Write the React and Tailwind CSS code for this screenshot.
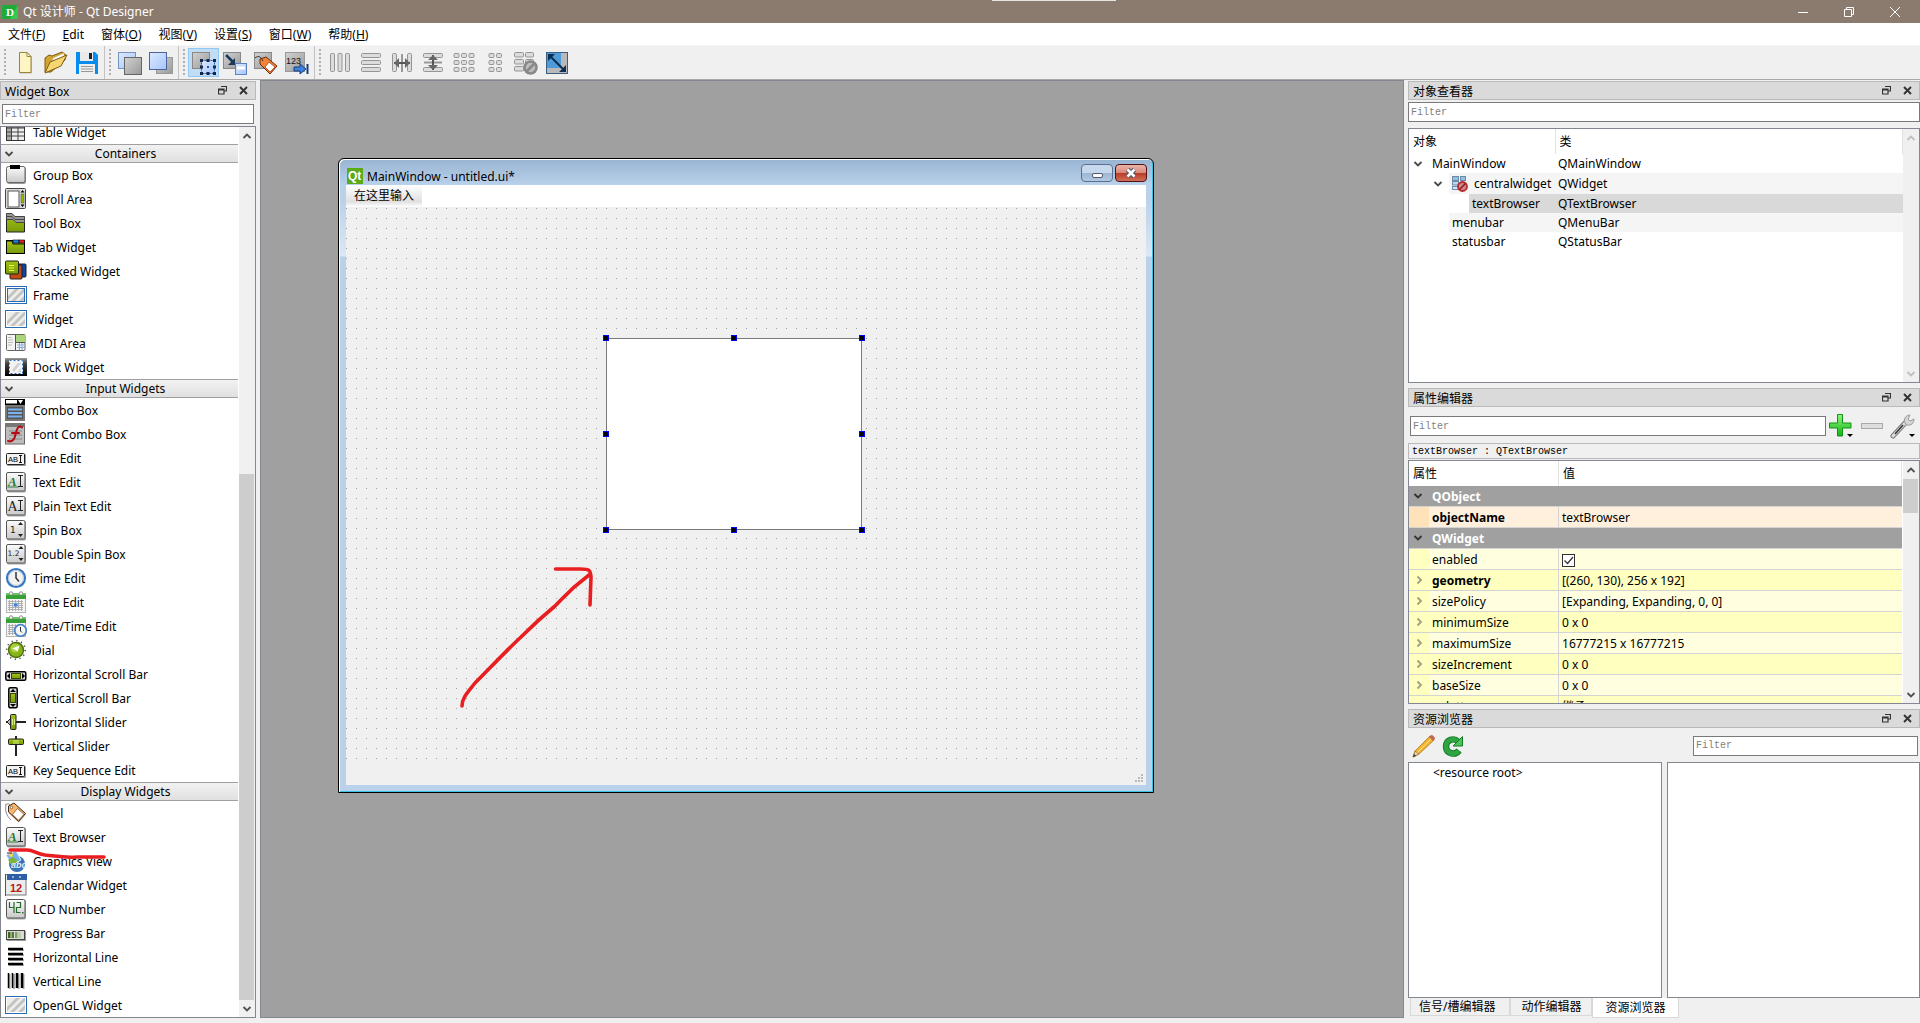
import React from "react";

const outline = { stroke: "#222", strokeWidth: 1 };

function Svg({ children, size = 22, className = "" }) {
  return (
    <svg viewBox={`0 0 ${size} ${size}`} width={size} height={size} className={`shrink-0 ${className}`} aria-hidden="true">
      {children}
    </svg>
  );
}

function Chevron({ dir = "down", color = "#4a4a4a" }) {
  const d = { down: "M1.5 3 5 6.5 8.5 3", up: "M1.5 7 5 3.5 8.5 7", right: "M3.5 1.5 7 5 3.5 8.5" }[dir];
  return (
    <Svg size={10}>
      <path d={d} fill="none" stroke={color} strokeWidth="1.8" />
    </Svg>
  );
}

function Hatch({ inner }) {
  return (
    <Svg>
      <rect x="0.5" y="2.5" width="21" height="17" fill="#fff" stroke="#2a6cb8" />
      <rect x="2" y="4" width="18" height="14" fill="#ededeb" />
      <path d="M2 13 11 4h4L2 17zM5 18 19 4h1v3L9 18zM13 18l7-7v4l-3 3z" fill="#c2c2c0" />
      {inner && <rect x="2.5" y="4.5" width="17" height="13" fill="none" stroke="#2a6cb8" />}
    </Svg>
  );
}

function Plate({ children }) {
  return (
    <Svg>
      <rect x="2" y="2" width="19" height="19.5" rx="1.5" fill="#aaa" />
      <rect x="1.5" y="1.5" width="18.5" height="18.5" rx="1.5" fill="url(#silver)" stroke="#555" />
      {children}
    </Svg>
  );
}

function AbiIcon() {
  return (
    <Svg>
      <rect x="2" y="7" width="19" height="12" rx="1" fill="#999" />
      <rect x="1.5" y="6.5" width="18" height="11" rx="1" fill="#f2f2f2" stroke="#222" />
      <text x="3" y="15" fontSize="7.500" fontFamily="Liberation Sans" fill="#000">AB</text>
      <path d="M14 8.500h3M14 15.500h3M15.500 8.500v7" stroke="#000" fill="none" strokeWidth=".9" />
    </Svg>
  );
}

function CalendarBase() {
  return (
    <g>
      <rect x="1.5" y="4.5" width="19" height="17" fill="#f5f5f5" stroke="#b5b5b5" />
      <rect x="1" y="2" width="20" height="6" fill="#36a137" />
      <rect x="1" y="2" width="20" height="2" fill="#6cc665" />
      <circle cx="6" cy="2.5" r="1.8" fill="#eee" stroke="#777" strokeWidth=".7" />
      <circle cx="16" cy="2.5" r="1.8" fill="#eee" stroke="#777" strokeWidth=".7" />
      <path d="M3 10.5h15M3 12.5h15M3 14.5h15M3 16.5h15M3 18.5h15M4.500 9v11M7.500 9v11M10.500 9v11M13.500 9v11M16.500 9v11" stroke="#aaa" strokeWidth=".9" />
    </g>
  );
}

const TagShape = () => (
  <g>
    <path d="M4 5 9 1.500l12 11-7 8L4 11z" fill="#555" opacity=".4" />
    <path d="M3.500 4 9 1l11.500 10.500-7 8L3.500 10z" fill="#f9b46c" stroke="#442a12" />
    <path d="m12.500 6.500 6.500 5.800-5.500 6-6-6z" fill="#fff" stroke="#7a431a" strokeWidth=".7" />
    <circle cx="6.5" cy="5.5" r="1.2" fill="#fff" stroke="#333" strokeWidth=".6" />
    <path d="M0 3c3-2 5-1 6 1M1 3c-1 6 0 10 5 15" fill="none" stroke="#888" />
  </g>
);

const icons = {
  table: (
    <Svg>
      <rect x="1.5" y="2.5" width="18" height="17" fill="#eee" stroke="#333" />
      <rect x="2" y="3" width="17" height="4" fill="#888" />
      <rect x="2" y="7" width="4" height="12" fill="#aaa" />
      <path d="M2 7h17M2 11h17M2 15h17M6.500 3v16M13 3v16" stroke="#444" />
    </Svg>
  ),
  group: (
    <Svg>
      <rect x="2" y="3" width="19" height="17" rx="2" fill="#999" />
      <rect x="1.5" y="2.5" width="18.5" height="16" rx="2" fill="url(#silver)" stroke="#666" />
      <rect x="5" y="1" width="10" height="4" fill="#000" />
    </Svg>
  ),
  scroll: (
    <Svg>
      <rect x=".5" y=".5" width="20" height="20" rx="1" fill="#ddd" stroke="#444" />
      <rect x="3" y="3" width="11" height="16" fill="#fff" stroke="#555" />
      <rect x="16" y="6" width="3" height="9" fill="#8fbe00" stroke="#444" strokeWidth=".5" />
      <path d="m15.500 4.500 2-2.500 2 2.500zM15.500 16.500l2 2.500 2-2.500z" />
    </Svg>
  ),
  toolbox: (
    <Svg>
      <path d="M1.500 2v18h18V7H12L8 3z" fill="url(#olive)" {...outline} />
      <path d="M1.500 1.500H7l3 3h9.500v6H11l-3-3H1.500z" fill="#999" stroke="#444" />
      <path d="M2 4.500h5l3 3h9" fill="none" stroke="#444" />
    </Svg>
  ),
  tab: (
    <Svg>
      <rect x="1.5" y="4.5" width="18" height="13" fill="url(#olive)" stroke="#000" />
      <rect x="8" y="4" width="6" height="3" fill="#1788e8" stroke="#000" strokeWidth=".6" />
      <rect x="14" y="4" width="5.5" height="3" fill="#e62020" stroke="#000" strokeWidth=".6" />
      <path d="M2 5h5l1 3h11" fill="none" stroke="#111" />
    </Svg>
  ),
  stacked: (
    <Svg>
      <rect x="9" y="4" width="12" height="13" rx="1" fill="#0f45a8" {...outline} />
      <rect x="5" y="5" width="12" height="14" rx="1" fill="#c24b12" {...outline} />
      <rect x=".5" y="1" width="13" height="13" rx="1" fill="url(#olive)" {...outline} />
      <path d="M4 5.500h5M4 8h5M4 10.500h5" stroke="#e9ff40" />
    </Svg>
  ),
  frame: <Hatch inner />,
  hatch: <Hatch />,
  mdi: (
    <Svg>
      <rect x="1.5" y="2.5" width="18.5" height="16" rx="1" fill="#f4f4f4" stroke="#666" />
      <rect x="11" y="3" width="9" height="7" fill="#a9d67c" />
      <path d="M10.500 3v15M11 10.500h9" stroke="#555" />
      <path d="M3 5.500h4M3 8h5M3 10.500h5M3 13h4" stroke="#bbb" />
      <path d="M12 13h7M12 15.500h7M14.500 11v7M17 11v7" stroke="#84aede" />
    </Svg>
  ),
  dock: (
    <Svg>
      <rect y="2" width="22" height="18" fill="url(#dark)" />
      <rect x="4.5" y="4.5" width="13" height="13" fill="#f2f2f2" stroke="#fff" />
      <rect x="4.5" y="4.5" width="13" height="13" fill="none" stroke="#2d6fc4" strokeDasharray="2 2" />
      <path d="m7 14 6-7h3l-7 9zM13 16l3-4v4z" fill="#d0d0d0" />
    </Svg>
  ),
  combo: (
    <Svg>
      <rect width="20" height="22" fill="#777" />
      <rect width="20" height="6" fill="#000" />
      <rect x="1" y="1" width="11" height="3.5" fill="#fff" />
      <path d="M13 1h5l-2.500 4z" fill="#fff" />
      <rect x="2" y="8" width="16" height="12" fill="#555" />
      <path d="M3 10.500h14M3 14h14M3 17.500h14" stroke="#7db0ee" strokeWidth="2" />
    </Svg>
  ),
  font: (
    <Svg>
      <rect x=".5" y=".5" width="19" height="20.5" fill="#bdbdbd" stroke="#666" />
      <rect width="20" height="4" fill="#777" />
      <path d="M4 8h13M4 12h13M4 16h13" stroke="#a2a2a2" strokeWidth="2" />
      <path d="M17 4.500c-3-3-5 1-6 5s-2 10.500-8 8.500M7 10h7" fill="none" stroke="#b50d12" strokeWidth="2" strokeLinecap="round" />
    </Svg>
  ),
  abi: <AbiIcon />,
  textedit: (
    <Plate>
      <text x="3" y="14.5" fontSize="13" fontStyle="italic" fontFamily="Liberation Serif" fontWeight="bold" fill="#287a32">A</text>
      <path d="M2.500 16h11" stroke="#287a32" />
      <path d="M13 4.500h5M13 15.500h5M15.500 4.500v11" stroke="#222" fill="none" />
    </Plate>
  ),
  plain: (
    <Plate>
      <text x="2.5" y="15.5" fontSize="14" fontFamily="Liberation Serif" fill="#222">A</text>
      <path d="M13 5.500h5M13 15.500h5M15.500 5.500v10" stroke="#222" fill="none" />
    </Plate>
  ),
  spin: (
    <Plate>
      <text x="5" y="14" fontSize="9" fontFamily="DejaVu Sans" fill="#222">1</text>
      <path d="m13 6 2.500-3L18 6zM13 15l2.500 3 2.500-3z" fill="#222" />
    </Plate>
  ),
  dspin: (
    <Plate>
      <text x="2.5" y="13" fontSize="7.5" fontFamily="DejaVu Sans" fill="#222">1.2</text>
      <path d="m13.500 6 2.500-3 2.500 3zM13.500 15l2.500 3 2.500-3z" fill="#222" />
    </Plate>
  ),
  time: (
    <Svg>
      <circle cx="11" cy="11" r="9" fill="#f3f3f1" stroke="#3976c2" strokeWidth="2.2" />
      <circle cx="11" cy="11" r="7.5" fill="none" stroke="#b6cbe4" />
      <path d="M11 5v6l3 3.500" fill="none" stroke="#333" strokeWidth="1.5" />
    </Svg>
  ),
  date: (
    <Svg>
      <CalendarBase />
      <rect x="9" y="12.5" width="3.5" height="3" fill="#3584e4" />
    </Svg>
  ),
  datetime: (
    <Svg>
      <CalendarBase />
      <circle cx="15.5" cy="15.5" r="5.8" fill="#f5f5f5" stroke="#4a84c8" strokeWidth="1.8" />
      <path d="M15.500 12v4l1.500 1.500" fill="none" stroke="#333" />
    </Svg>
  ),
  dial: (
    <Svg>
      <circle cx="11" cy="11" r="9.3" fill="none" stroke="#4c4c3a" strokeWidth="1.6" strokeDasharray="1.2 3.67" />
      <circle cx="11" cy="11" r="7.5" fill="#86b31a" stroke="#4d6b0b" strokeWidth="1.4" />
      <circle cx="10" cy="9" r="4.5" fill="#b9dc4c" opacity=".7" />
      <path d="m14.500 6.500-2 6-2-1.500-3.500-1.500z" fill="#fff" />
    </Svg>
  ),
  hscroll: (
    <Svg>
      <rect x=".8" y="8.8" width="20" height="8.4" rx="1.5" fill="#d8d8d8" stroke="#000" strokeWidth="1.5" />
      <rect x="6.5" y="10.5" width="9" height="5" fill="url(#olive)" stroke="#384a00" />
      <path d="m5 10-3 3 3 3zM17 10l3 3-3 3z" />
    </Svg>
  ),
  vscroll: (
    <Svg>
      <rect x="3.8" y=".8" width="8.4" height="20" rx="1.5" fill="#d8d8d8" stroke="#000" strokeWidth="1.5" />
      <rect x="5.5" y="6.5" width="5" height="9" fill="url(#olive)" stroke="#384a00" />
      <path d="m5 5 3-3 3 3zM5 17l3 3 3-3z" />
    </Svg>
  ),
  hslider: (
    <Svg>
      <path d="M1 11h20" stroke="#222" strokeWidth="2" />
      <path d="m5 8-3 3 3 3" fill="#bbb" stroke="#222" />
      <rect x="5.5" y="3.5" width="5.5" height="15" rx="1" fill="url(#olive)" {...outline} />
      <path d="M7.500 8v6M9.500 8v6" stroke="#e9ffa0" strokeWidth=".8" />
    </Svg>
  ),
  vslider: (
    <Svg>
      <path d="M11 1v20" stroke="#222" strokeWidth="2" />
      <rect x="3.5" y="4" width="15" height="5.5" rx="1" fill="url(#olive)" {...outline} />
      <path d="M8 6h6M8 8h6" stroke="#e9ffa0" strokeWidth=".8" />
    </Svg>
  ),
  label: <Svg><TagShape /></Svg>,
  graphics: (
    <Svg>
      <circle cx="12" cy="14" r="8" fill="#3a72b4" />
      <path d="m1 5 10-4 5 9-9 5z" fill="#72b3ec" stroke="#e8eef5" />
      <path d="m3 10 5-3 5 4-6 4z" fill="#7fb239" />
      <circle cx="6" cy="5" r="2" fill="#ffd53d" />
      <path d="M2 3h5" stroke="#222" />
      <text x="6" y="18" fontSize="9" fontWeight="bold" fontStyle="italic" fontFamily="Liberation Sans" fill="#dceaf7">abc</text>
    </Svg>
  ),
  calendar: (
    <Svg>
      <rect x=".5" y=".5" width="20.5" height="20.5" fill="#ececec" stroke="#777" />
      <path d="M.5 0v22" stroke="#555" />
      <rect x="2" width="20" height="6" fill="#2d5fa6" />
      <path d="M7 3h2M14 3h2" stroke="#fff" />
      <text x="5" y="18" fontSize="11" fontWeight="bold" fontFamily="Liberation Sans" fill="#b5191e">12</text>
    </Svg>
  ),
  lcd: (
    <Plate>
      <path d="M4.500 4v5.500h4.500M9 4v11M11.500 4.500h4v5h-4v5h4" fill="none" stroke="#246a28" strokeWidth="1.2" />
      <rect x="17" y="14" width="1.5" height="1.5" fill="#246a28" />
    </Plate>
  ),
  progress: (
    <Svg>
      <rect x="2" y="9" width="19" height="10" fill="#999" />
      <rect x="1.5" y="8.5" width="18" height="9" fill="#d9ddd2" stroke="#444" />
      <rect x="3" y="10" width="2.5" height="6" fill="#41661e" />
      <rect x="6.5" y="10" width="2.5" height="6" fill="#55793a" />
      <rect x="10" y="10" width="2.5" height="6" fill="#82a06c" />
      <rect x="13.5" y="10" width="2" height="6" fill="#b4c4a6" />
    </Svg>
  ),
  hline: (
    <Svg>
      <path d="M4 4h15M4 9h15M4 14h15M4 19h15" stroke="#aaa" strokeWidth="2" />
      <path d="M3 3h15M3 8h15M3 13h15M3 18h15" stroke="#000" strokeWidth="2.4" />
    </Svg>
  ),
  vline: (
    <Svg>
      <path d="M4.500 4v15M9 4v15M13.500 4v15M18.500 4v15" stroke="#aaa" strokeWidth="2" />
      <path d="M3.500 3v15M7.500 3v15" stroke="#000" strokeWidth="1.5" />
      <path d="M12 3v15M17 3v15" stroke="#000" strokeWidth="2.5" />
    </Svg>
  ),
};

const groups = [
  { title: null, items: [["Table Widget", "table"]] },
  {
    title: "Containers",
    items: [
      ["Group Box", "group"], ["Scroll Area", "scroll"], ["Tool Box", "toolbox"], ["Tab Widget", "tab"],
      ["Stacked Widget", "stacked"], ["Frame", "frame"], ["Widget", "hatch"], ["MDI Area", "mdi"], ["Dock Widget", "dock"],
    ],
  },
  {
    title: "Input Widgets",
    items: [
      ["Combo Box", "combo"], ["Font Combo Box", "font"], ["Line Edit", "abi"], ["Text Edit", "textedit"],
      ["Plain Text Edit", "plain"], ["Spin Box", "spin"], ["Double Spin Box", "dspin"], ["Time Edit", "time"],
      ["Date Edit", "date"], ["Date/Time Edit", "datetime"], ["Dial", "dial"], ["Horizontal Scroll Bar", "hscroll"],
      ["Vertical Scroll Bar", "vscroll"], ["Horizontal Slider", "hslider"], ["Vertical Slider", "vslider"],
      ["Key Sequence Edit", "abi"],
    ],
  },
  {
    title: "Display Widgets",
    items: [
      ["Label", "label"], ["Text Browser", "textedit"], ["Graphics View", "graphics"], ["Calendar Widget", "calendar"],
      ["LCD Number", "lcd"], ["Progress Bar", "progress"], ["Horizontal Line", "hline"], ["Vertical Line", "vline"],
      ["OpenGL Widget", "hatch"],
    ],
  },
];

function Gradients() {
  return (
    <svg width="0" height="0" className="absolute" aria-hidden="true">
      <defs>
        <linearGradient id="silver" x1="0" y1="0" x2="0" y2="1">
          <stop offset="0" stopColor="#fbfbfb" /><stop offset="1" stopColor="#c9c9c9" />
        </linearGradient>
        <linearGradient id="olive" x1="0" y1="0" x2="0" y2="1">
          <stop offset="0" stopColor="#a3c614" /><stop offset="1" stopColor="#78990a" />
        </linearGradient>
        <linearGradient id="dark" x1="0" y1="0" x2="0" y2="1">
          <stop offset="0" stopColor="#999" /><stop offset=".3" stopColor="#444" /><stop offset="1" stopColor="#000" />
        </linearGradient>
        <linearGradient id="sheet" x1="0" y1="0" x2="1" y2="1">
          <stop offset="0" stopColor="#dde9ff" /><stop offset="1" stopColor="#a5c6fb" />
        </linearGradient>
        <linearGradient id="steel" x1="0" y1="0" x2="1" y2="1">
          <stop offset="0" stopColor="#d2d2d2" /><stop offset="1" stopColor="#999" />
        </linearGradient>
        <linearGradient id="leaf" x1="0" y1="0" x2="0" y2="1">
          <stop offset="0" stopColor="#8df57d" /><stop offset="1" stopColor="#12b512" />
        </linearGradient>
      </defs>
    </svg>
  );
}

const bar = { fill: "#dcdcdc", stroke: "#949494" };

const toolGroups = [
  [
    ["新建", <Svg size={24}><path d="M7 2.500h8l4 4v16H7z" fill="#888" opacity=".5" /><path d="M6.500 1.500H14l4 4v16H6.500z" fill="#fdf6c4" stroke="#9a8638" /><path d="M14 1.500v4h4z" fill="#fff" stroke="#9a8638" /></Svg>],
    ["打开", <Svg size={24}><path d="M1 21V7l4-3 3 1 10-4 4 3-1 5-14 12z" fill="#d4a432" stroke="#7e5c10" /><path d="m6 18 3-11 11-5v6z" fill="#fff" stroke="#bba766" strokeWidth=".6" /><path d="M1 22 6 11l17-7-6 11z" fill="#f5d671" stroke="#7e5c10" /></Svg>],
    ["保存", <Svg size={24}><path d="M1 1h19l3 3v19H1z" fill="#078df0" /><path d="M5 1h13v9H5z" fill="#e9e9e9" /><path d="M14 2h3v6h-3z" fill="#222" /><path d="M4 13h16v10H4z" fill="#eee" /><path d="M6 15.500h12M6 18h12M6 20.500h12" stroke="#999" /></Svg>],
  ],
  [
    ["置后", <Svg size={24}><rect x=".5" y="1.5" width="17" height="16" fill="url(#sheet)" stroke="#7794c0" /><rect x="6.5" y="6.5" width="17" height="17" fill="url(#steel)" stroke="#666" /></Svg>],
    ["置前", <Svg size={24}><rect x="7.5" y="6.5" width="16" height="16" fill="url(#steel)" stroke="#999" /><rect x=".5" y="1.5" width="17" height="17" fill="url(#sheet)" stroke="#4b659a" /></Svg>],
  ],
  [
    ["编辑窗口部件", <Svg size={24}><rect x=".5" y="1.5" width="17" height="16" fill="url(#steel)" stroke="#888" /><rect x="9.5" y="9.5" width="13" height="13" fill="url(#sheet)" stroke="#2552a3" strokeDasharray="2 1" /><path d="M8 8h3v3H8zM14.500 8h3v3h-3zM21 8h3v3h-3zM8 14.500h3v3H8zM21 14.500h3v3h-3zM8 21h3v3H8zM14.500 21h3v3h-3zM21 21h3v3h-3z" fill="#13274d" /><path d="M15 15h2v2h-2z" fill="#2552a3" /></Svg>],
    ["编辑信号/槽", <Svg size={24}><rect x=".5" y="1.5" width="17" height="16" fill="url(#steel)" stroke="#888" /><path d="m3 4 8 8" stroke="#1d3a5c" strokeWidth="2.5" /><path d="M12 7v7H5z" fill="#1d3a5c" /><rect x="12.5" y="12.5" width="11" height="11" fill="url(#sheet)" stroke="#5d83c4" /><path d="M14 17h8" stroke="#fff" strokeWidth="3" /></Svg>],
    ["编辑伙伴", <Svg size={24}><rect x=".5" y="1.5" width="17" height="16" fill="url(#steel)" stroke="#888" /><path d="m6 8 6-2 11 9-7 8L6 13z" fill="#ef8437" stroke="#6d2b0d" /><path d="m15 11 6 5-5 5-5-5z" fill="#fff" stroke="#c3521b" /><path d="M1 7c4-3 6-1 8 3" stroke="#333" fill="none" /></Svg>],
    ["编辑 Tab 顺序", <Svg size={24}><rect x=".5" y="1.5" width="19" height="19" fill="url(#steel)" stroke="#999" /><text x="1" y="13" fontSize="9" fontFamily="Liberation Sans" fill="#111">123</text><path d="M9 16h6v-3l6 5-6 5v-3H9z" fill="#3d83dc" stroke="#163f80" /><path d="M22.500 13v10" stroke="#163f80" strokeWidth="2" /></Svg>],
  ],
  [
    ["水平布局", <Svg size={24}><rect x="2.5" y="2.5" width="4" height="18" rx="1" {...bar} /><rect x="10" y="2.5" width="4" height="18" rx="1" {...bar} /><rect x="17.5" y="2.5" width="4" height="18" rx="1" {...bar} /></Svg>],
    ["垂直布局", <Svg size={24}><rect x="2.5" y="2.5" width="19" height="4" rx="1" {...bar} /><rect x="2.5" y="9.5" width="19" height="4" rx="1" {...bar} /><rect x="2.5" y="16.5" width="19" height="4" rx="1" {...bar} /></Svg>],
    ["使用分裂器水平布局", <Svg size={24}><rect x="2.5" y="2.5" width="4" height="18" rx="1" {...bar} /><rect x="17.5" y="2.5" width="4" height="18" rx="1" {...bar} /><path d="M12 3v18" stroke="#999" strokeWidth="2" /><path d="M4 12h16" stroke="#555" strokeWidth="2" /><path d="m9 7-5 5 5 5zM15 7l5 5-5 5z" fill="#666" /></Svg>],
    ["使用分裂器垂直布局", <Svg size={24}><rect x="2.5" y="2.5" width="19" height="4" rx="1" {...bar} /><rect x="2.5" y="16.5" width="19" height="4" rx="1" {...bar} /><path d="M3 11.500h18" stroke="#999" strokeWidth="2" /><path d="M12 4v15" stroke="#555" strokeWidth="2" /><path d="m7 9 5-5 5 5zM7 14l5 5 5-5z" fill="#666" /></Svg>],
    ["栅格布局", <Svg size={24}>{[2, 9.5, 17].map((x) => [2.5, 9.5, 16.5].map((y) => <rect key={`${x}-${y}`} x={x} y={y} width="5" height="4" rx="1" {...bar} />))}</Svg>],
    ["在窗体布局中布局", <Svg size={24}>{[6, 13.5].map((x) => [2.5, 9.5, 16.5].map((y) => <rect key={`${x}-${y}`} x={x} y={y} width="5" height="4" rx="1" {...bar} />))}</Svg>],
    ["打破布局", <Svg size={24}><rect x=".5" y="1.5" width="9" height="4.5" rx="1" {...bar} /><rect x="11.5" y="1.5" width="8" height="4.5" rx="1" {...bar} /><rect x=".5" y="8.5" width="9" height="4.5" rx="1" {...bar} /><rect x="11.5" y="8.5" width="8" height="4.5" rx="1" {...bar} /><rect x=".5" y="15.5" width="9" height="4.5" rx="1" {...bar} /><circle cx="16.5" cy="16.5" r="6" fill="#bbb" stroke="#888" strokeWidth="2.5" /><path d="m12.500 20.500 8-8" stroke="#888" strokeWidth="2.5" /></Svg>],
    ["调整大小", <Svg size={24}><rect x="1.5" y="1.5" width="21" height="21" fill="#b9b9b9" stroke="#3a5f86" /><rect x="2" y="2" width="14" height="15" fill="#4d9bd8" /><path d="m5 5 14 14" stroke="#0d2f4f" strokeWidth="2" /><path d="M3 3h7l-7 7zM21 21v-7l-7 7z" fill="#0d2f4f" /></Svg>],
  ],
];

const menus = [["文件", "F"], ["", "E", "dit"], ["窗体", "O"], ["视图", "V"], ["设置", "S"], ["窗口", "W"], ["帮助", "H"]];

function FilterInput({ label, className = "" }) {
  return (
    <input
      type="text"
      aria-label={label}
      placeholder="Filter"
      className={`h-5 min-w-0 rounded-none border border-[#7a7a7a] bg-white px-0.5 font-['Liberation_Mono',monospace] text-[10px] outline-none placeholder:text-[#808080] ${className}`}
    />
  );
}

function DockTitle({ children }) {
  return (
    <header className="flex h-[19px] shrink-0 items-center border border-[#b9b9b9] bg-[#dadada] pl-1 pr-[7px]">
      <h2 className="flex-1 pt-0.5 leading-4">{children}</h2>
      <button type="button" aria-label="浮动" className="mr-3">
        <Svg size={9}><path d="M3 .5h5.500v4.500H6M.5 3H6v5H.5zM.5 4H6" fill="none" stroke="#333" strokeWidth="1.2" /></Svg>
      </button>
      <button type="button" aria-label="关闭">
        <Svg size={9}><path d="m1 1 7 7M8 1 1 8" stroke="#333" strokeWidth="1.9" /></Svg>
      </button>
    </header>
  );
}

function ScrollBar({ before, thumb, after, disabled }) {
  const color = disabled ? "#bfbfbf" : "#505050";
  return (
    <div className="flex w-4 shrink-0 flex-col bg-[#f0f0f0]" aria-hidden="true">
      <div className="flex h-[18px] items-center pl-[3px]"><Chevron dir="up" color={color} /></div>
      <div className={before} />
      {thumb && <div className={`w-[15px] bg-[#cdcdcd] ${thumb}`} />}
      <div className={after} />
      <div className="flex h-[17px] items-center pl-[3px]"><Chevron color={color} /></div>
    </div>
  );
}

function WidgetBox() {
  return (
    <aside className="relative mr-1 flex w-64 shrink-0 flex-col pb-[5px] pt-px">
      <DockTitle>Widget Box</DockTitle>
      <FilterInput label="过滤窗口部件" className="mx-0.5 mb-0.5 mt-1 shrink-0" />
      <div className="flex min-h-0 flex-1 border border-[#828790] bg-white">
        <div className="flex min-w-0 flex-1 flex-col justify-end overflow-hidden pr-px">
          {groups.map((g) => (
            <section key={g.title ?? "views"} className="shrink-0">
              {g.title && (
                <h3 className="flex h-[19px] items-center border-y border-[#a0a0a0] bg-linear-to-b from-[#f2f2f2] to-[#e0e0e0] pl-[3px] pr-px">
                  <Chevron />
                  <span className="flex-1 text-center leading-4">{g.title}</span>
                </h3>
              )}
              <ul>
                {g.items.map(([name, icon]) => (
                  <li key={name} className="flex h-6 items-center gap-1.5 pl-1">
                    {icons[icon]}
                    <span className="pt-0.5">{name}</span>
                  </li>
                ))}
              </ul>
            </section>
          ))}
        </div>
        <ScrollBar before="grow-[329]" thumb="grow-[525]" after="grow-0" />
      </div>
      <svg viewBox="0 0 110 20" width="110" height="20" className="absolute bottom-[159px] left-0" aria-hidden="true">
        <path d="M10 6h17c7 0 9 4 18 5 12 1 17 3 32 2h27" fill="none" stroke="#e81e20" strokeWidth="3.5" strokeLinecap="round" />
      </svg>
    </aside>
  );
}

function Handle({ className }) {
  return <span className={`absolute size-1.5 border border-[#0000ff] bg-black ${className}`} />;
}

function FormWindow() {
  return (
    <div className="absolute left-[77px] top-[77px] flex h-[635px] w-[816px] flex-col rounded-t-md border border-black bg-[linear-gradient(#98b4d2,#b9d1ea_26px,#b9d1ea_40px,#dbe8f6_97px,#b9d1ea_98px)] px-[7px] pb-[7px] shadow-[inset_1px_1px_0_#fff,inset_-1px_-1px_0_#39c5e3]">
      <header className="flex h-[26px] shrink-0 items-center">
        <Svg size={16} className="ml-px mt-2">
          <rect width="16" height="16" fill="#5caa15" />
          <text x="1" y="12" fontSize="12" fontWeight="bold" fontFamily="Liberation Sans Narrow, Liberation Sans" fill="#fff">Qt</text>
        </Svg>
        <h2 className="ml-1 mt-2.5 flex-1 leading-4">MainWindow - untitled.ui*</h2>
        <div className="-mr-px mt-0.5 flex gap-0.5">
          <button type="button" aria-label="最小化" className="flex h-[18px] w-8 items-center justify-center rounded-sm border border-[#5b7090] bg-[linear-gradient(#c7d8ec,#c7d8ec_50%,#9cb4d0_50%,#b3c9e2)]">
            <span className="mt-1 h-[5px] w-[11px] rounded-xs border border-[#53596b] bg-white" />
          </button>
          <button type="button" aria-label="关闭窗体" className="flex h-[18px] w-8 items-center justify-center rounded-sm border border-[#521117] bg-[linear-gradient(#eab5a9,#d9897b_48%,#b83a26_50%,#cf7158)]">
            <Svg size={12}>
              <path d="m2.500 2.500 7 7M9.500 2.500l-7 7" stroke="#535566" strokeWidth="4.6" />
              <path d="m2.500 2.500 7 7M9.500 2.500l-7 7" stroke="#fff" strokeWidth="2.6" />
            </Svg>
          </button>
        </div>
      </header>
      <div className="flex min-h-0 flex-1 flex-col bg-[#f0f0f0]">
        <div className="mb-px flex h-[22px] shrink-0 bg-white">
          <button type="button" className="bg-[linear-gradient(#fff,#e0e0e0_75%,#fff)] px-2 leading-[22px]">在这里输入</button>
        </div>
        <div className="relative flex-1 bg-[conic-gradient(at_1px_1px,transparent_75%,#a0a0a0_0)] bg-[length:10px_10px]">
          <div className="absolute left-[260px] top-[130px] h-48 w-64 border border-[#7a7a7a] bg-white" />
          <div className="absolute left-[257px] top-[127px] h-[198px] w-[262px]">
            <Handle className="left-0 top-0" />
            <Handle className="left-32 top-0" />
            <Handle className="right-0 top-0" />
            <Handle className="left-0 top-24" />
            <Handle className="right-0 top-24" />
            <Handle className="bottom-0 left-0" />
            <Handle className="bottom-0 left-32" />
            <Handle className="bottom-0 right-0" />
          </div>
          <svg viewBox="0 0 140 150" width="140" height="150" className="absolute left-[110px] top-[355px]" aria-hidden="true">
            <path d="M6 143c0-8 5-13 13-23C33 106 52 86 65 74c10-10 17-17 34-31 9-9 14-16 34-31M99.500 6h25c9 0 10 1 10.500 8l-1 28" fill="none" stroke="#e81e20" strokeWidth="3.6" strokeLinecap="round" strokeLinejoin="round" />
          </svg>
        </div>
        <div className="flex h-[22px] shrink-0 items-end justify-end p-0.5">
          <Svg size={10}><path d="M7 1h2v2H7zM4 4h2v2H4zM7 4h2v2H7zM1 7h2v2H1zM4 7h2v2H4zM7 7h2v2H7z" fill="#b9b9b9" /></Svg>
        </div>
      </div>
    </div>
  );
}

const objects = [
  { name: "MainWindow", cls: "QMainWindow", pad: "ml-1", open: true, h: "h-[19px]", bg: "" },
  { name: "centralwidget", cls: "QWidget", pad: "ml-6", open: true, icon: true, h: "h-[21px]", bg: "bg-[#f5f5f5]" },
  { name: "textBrowser", cls: "QTextBrowser", pad: "ml-[60px]", h: "h-[19px]", bg: "bg-[#d9d9d9]" },
  { name: "menubar", cls: "QMenuBar", pad: "ml-10", h: "h-[19px]", bg: "bg-[#f5f5f5]" },
  { name: "statusbar", cls: "QStatusBar", pad: "ml-10", h: "h-[19px]", bg: "" },
];

function ObjectInspector() {
  return (
    <section className="flex min-h-0 flex-[302] flex-col">
      <DockTitle>对象查看器</DockTitle>
      <FilterInput label="过滤对象" className="mb-1.5 mt-0.5 shrink-0" />
      <div className="flex min-h-0 flex-1 border border-[#828790] bg-white">
        <div className="min-w-0 flex-1 overflow-hidden">
          <table className="w-full table-fixed border-collapse">
            <colgroup><col className="w-[146px]" /><col /></colgroup>
            <thead>
              <tr className="h-[25px] text-left">
                <th className="border-r border-[#e2e2e2] p-0 pl-1 font-normal">对象</th>
                <th className="border-r border-[#e2e2e2] p-0 pl-1 font-normal">类</th>
              </tr>
            </thead>
            <tbody>
              {objects.map((o) => (
                <tr key={o.name} className={o.h}>
                  <td className="p-0">
                    <div className={`flex items-center ${o.h} ${o.pad}`}>
                      {o.open && <span className="mr-1.5 shrink-0"><Chevron /></span>}
                      <div className={`flex h-full flex-1 items-center gap-1.5 whitespace-nowrap pl-[3px] ${o.bg}`}>
                        {o.icon && (
                          <Svg size={16}>
                            <rect x=".5" y=".5" width="6" height="4" fill="#8fc0e8" stroke="#6d8ba8" />
                            <rect x="8.5" y=".5" width="5" height="4" fill="#8fc0e8" stroke="#6d8ba8" />
                            <rect x=".5" y="5.5" width="6" height="3.5" fill="#b9d6ef" stroke="#6d8ba8" />
                            <rect x=".5" y="10.5" width="6" height="3" fill="#d5e6f5" stroke="#6d8ba8" />
                            <circle cx="10.5" cy="10.5" r="4.5" fill="#c98a8a" stroke="#b72a2f" strokeWidth="1.8" />
                            <path d="m7.500 13.500 6-6" stroke="#8d1d22" strokeWidth="1.6" />
                          </Svg>
                        )}
                        {o.name}
                      </div>
                    </div>
                  </td>
                  <td className={`p-0 pl-[3px] ${o.bg}`}>{o.cls}</td>
                </tr>
              ))}
            </tbody>
          </table>
        </div>
        <ScrollBar before="grow" after="grow-0" disabled />
      </div>
    </section>
  );
}

const light = "bg-[#ffffdf]";
const deep = "bg-[#ffffbf]";
const properties = [
  { group: "QObject" },
  { name: "objectName", value: "textBrowser", bold: true, bg: "bg-[#fff0de]", side: "bg-[#ffe1ba]" },
  { group: "QWidget" },
  { name: "enabled", check: true, bg: light, side: deep },
  { name: "geometry", value: "[(260, 130), 256 x 192]", bold: true, bg: deep, side: deep, more: true },
  { name: "sizePolicy", value: "[Expanding, Expanding, 0, 0]", bg: light, side: deep, more: true },
  { name: "minimumSize", value: "0 x 0", bg: deep, side: deep, more: true },
  { name: "maximumSize", value: "16777215 x 16777215", bg: light, side: deep, more: true },
  { name: "sizeIncrement", value: "0 x 0", bg: deep, side: deep, more: true },
  { name: "baseSize", value: "0 x 0", bg: light, side: deep, more: true },
  { name: "palette", value: "继承", bg: deep, side: deep },
];

function PropertyEditor() {
  return (
    <section className="flex min-h-0 flex-[316] flex-col">
      <DockTitle>属性编辑器</DockTitle>
      <div className="flex h-9 shrink-0 items-center pl-0.5 pt-0.5">
        <FilterInput label="过滤属性" className="flex-1" />
        <button type="button" aria-label="添加动态属性" className="ml-0.5">
          <Svg size={26}>
            <path d="M9.500 1.500h5v8.500h8.500v5h-8.500v8h-5v-8H1.500v-5h8z" fill="url(#leaf)" stroke="#159016" />
            <path d="M19 21h6l-3 3z" />
          </Svg>
        </button>
        <button type="button" aria-label="删除动态属性" className="ml-1.5">
          <Svg size={24}><rect x="1.5" y="9.5" width="21" height="5" fill="#ddd" stroke="#aaa" /></Svg>
        </button>
        <button type="button" aria-label="配置属性编辑器" className="ml-1.5 mr-1">
          <Svg size={26}>
            <path d="m3 23 13-14" stroke="#777" strokeWidth="5" strokeLinecap="round" />
            <path d="m3 23 13-14" stroke="#ddd" strokeWidth="3" strokeLinecap="round" />
            <path d="m5 21 8-9" stroke="#333" strokeWidth="1.5" />
            <path d="M15 10c-2-4 1-8 5-8l-2 4 2 2 4-2c0 4-3 7-7 6z" fill="#d5d5d5" stroke="#999" />
            <path d="M19 21h6l-3 3z" />
          </Svg>
        </button>
      </div>
      <p className="mb-px h-4 shrink-0 border border-[#b9b9b9] pl-[3px] font-['Liberation_Mono',monospace] text-[10px] leading-4">textBrowser : QTextBrowser</p>
      <div className="flex min-h-0 flex-1 border border-[#828790] bg-white">
        <div className="min-w-0 flex-1 overflow-hidden pr-px">
          <table className="w-full table-fixed border-separate border-spacing-0">
            <colgroup><col className="w-5" /><col className="w-[130px]" /><col /></colgroup>
            <thead>
              <tr className="h-[25px] text-left">
                <th colSpan={2} className="border-r border-[#e2e2e2] p-0 pl-1 font-normal">属性</th>
                <th className="border-r border-[#e2e2e2] p-0 pl-1 font-normal">值</th>
              </tr>
            </thead>
            <tbody>
              {properties.map((p) =>
                p.group ? (
                  <tr key={p.group} className="h-[21px] bg-[#a0a0a0] font-bold text-white">
                    <td className="border-b border-[#d4d4d4] p-0 pl-1"><Chevron color="#333" /></td>
                    <td colSpan={2} className="border-b border-[#d4d4d4] p-0 pl-[3px] pt-0.5 leading-[18px]">{p.group}</td>
                  </tr>
                ) : (
                  <tr key={p.name} className={`h-[21px] ${p.bg}`}>
                    <td className={`border-b border-[#d4d4d4] p-0 pl-[5px] ${p.side}`}>{p.more && <Chevron dir="right" color="#a0a080" />}</td>
                    <td className={`border-b border-r border-[#d4d4d4] p-0 pl-[3px] pt-0.5 leading-[18px] ${p.bold ? "font-bold" : ""}`}>{p.name}</td>
                    <td className="border-b border-[#d4d4d4] p-0 pl-[3px] pt-0.5 leading-[18px]">
                      {p.check ? (
                        <label className="grid size-[13px] border border-[#333] bg-white">
                          <input type="checkbox" defaultChecked aria-label="enabled" className="peer col-start-1 row-start-1 appearance-none" />
                          <svg viewBox="0 0 11 11" width="11" height="11" className="invisible col-start-1 row-start-1 peer-checked:visible">
                            <path d="m1.500 5.500 3 3L10 2" fill="none" stroke="#333" strokeWidth="1.2" />
                          </svg>
                        </label>
                      ) : (
                        p.value
                      )}
                    </td>
                  </tr>
                )
              )}
            </tbody>
          </table>
        </div>
        <ScrollBar before="grow-0" thumb="grow-[34]" after="grow-[173]" />
      </div>
    </section>
  );
}

function ResourceBrowser() {
  return (
    <section className="flex min-h-0 flex-[309] flex-col">
      <DockTitle>资源浏览器</DockTitle>
      <div className="flex h-[34px] shrink-0 items-center gap-1.5 pl-1 pr-0.5 pt-px">
        <button type="button" aria-label="编辑资源">
          <Svg size={24}>
            <path d="m1 23 2-6L18 2l4 4L7 20z" fill="#f3b52f" stroke="#a4731a" strokeWidth=".8" />
            <path d="m5 19 14-14" stroke="#ffe28c" />
            <path d="m1 23 2-6 4 3z" fill="#e8cf9f" stroke="#8b6a3a" strokeWidth=".6" />
            <path d="m17 3 2-2c2 0 4 2 4 4l-2 2z" fill="#c4694f" />
            <path d="m1 23 1-3 2 2z" fill="#333" />
          </Svg>
        </button>
        <button type="button" aria-label="重新加载">
          <Svg size={22}>
            <path d="M17 15.500c-4 5.500-13 3-13-4s8-9 12-5" fill="none" stroke="#137a23" strokeWidth="6.4" />
            <path d="M17 15.500c-4 5.500-13 3-13-4s8-9 12-5" fill="none" stroke="#2ea540" strokeWidth="4.6" />
            <path d="M20.500 1.500v9.500h-9.500z" fill="#4fc35a" stroke="#137a23" />
          </Svg>
        </button>
        <FilterInput label="过滤资源" className="ml-auto w-[225px]" />
      </div>
      <div className="grid min-h-0 flex-1 grid-cols-2 gap-[5px]">
        <div className="border border-[#828790] bg-white pl-6 pt-0.5 leading-4">&lt;resource root&gt;</div>
        <div className="border border-[#828790] bg-white" />
      </div>
      <nav className="flex h-5 shrink-0 items-start pl-0.5" role="tablist">
        <button type="button" role="tab" className="h-[18px] border border-t-0 border-[#d9d9d9] pl-2 pr-3.5 leading-[18px]">信号/槽编辑器</button>
        <button type="button" role="tab" className="h-[18px] border border-t-0 border-[#d9d9d9] px-2.5 leading-[18px]">动作编辑器</button>
        <button type="button" role="tab" aria-selected="true" className="h-5 border border-t-0 border-[#d9d9d9] bg-white px-3 leading-5">资源浏览器</button>
      </nav>
    </section>
  );
}

export default function App() {
  return (
    <div className="flex h-screen flex-col overflow-hidden bg-[#f0f0f0] font-['Noto_Sans','Noto_Sans_CJK_SC',sans-serif] text-xs text-black">
      <Gradients />
      <header className="relative flex h-[23px] shrink-0 items-center bg-[#8b7a6e] px-0.5 text-white">
        <Svg size={16}>
          <rect y="1" width="16" height="14" rx="1" fill="#1fab38" />
          <path d="M16 1v14H8z" fill="#32c94d" />
          <text x="4" y="12" fontSize="11" fontWeight="bold" fontFamily="Liberation Serif" fill="#fff">D</text>
        </Svg>
        <h1 className="ml-[5px] flex-1">Qt 设计师 - Qt Designer</h1>
        <span className="absolute left-1/2 top-0 ml-8 h-px w-[124px] bg-[#e8e4e0]" />
        <div className="flex">
          <button type="button" aria-label="最小化" className="flex w-[46px] justify-center"><Svg size={10}><path d="M0 5.500h10" stroke="#fff" /></Svg></button>
          <button type="button" aria-label="还原" className="flex w-[46px] justify-center"><Svg size={10}><path d="M.5 2.500h7v7h-7zM2.500 2.500v-2h7v7h-2" fill="none" stroke="#fff" /></Svg></button>
          <button type="button" aria-label="关闭" className="flex w-[46px] justify-center"><Svg size={10}><path d="m0 0 10 10M10 0 0 10" stroke="#fff" /></Svg></button>
        </div>
      </header>
      <nav className="flex h-[23px] shrink-0 items-center gap-px border-b border-[#f5f5f5] bg-white">
        {menus.map(([text, key, rest]) => (
          <button type="button" key={key} className="px-2 pt-0.5">
            {rest ? <><u>{key}</u>{rest}</> : <>{text}(<u>{key}</u>)</>}
          </button>
        ))}
      </nav>
      <div className="flex h-[34px] shrink-0 border-b border-[#a8a8a8]" role="toolbar">
        {toolGroups.map((tools, g) => (
          <div key={g} className={`flex items-center ${g < 3 ? "border-r border-[#c3c3c3] pr-0.5" : ""}`}>
            <span className="flex w-[9px] justify-center">
              <svg width="2" height="27" viewBox="0 0 2 27" aria-hidden="true"><path d="M1 0v27" stroke="#b0b0b0" strokeWidth="2" strokeDasharray="2 2" /></svg>
            </span>
            {tools.map(([label, icon], i) => (
              <button
                type="button"
                key={label}
                aria-label={label}
                className={`flex h-[29px] w-[31px] items-center justify-center border ${g === 2 && i === 0 ? "border-[#90c8f6] bg-[#c1dcf3]" : "border-transparent"}`}
              >
                {icon}
              </button>
            ))}
          </div>
        ))}
      </div>
      <main className="flex min-h-0 flex-1">
        <WidgetBox />
        <div className="relative mb-[5px] min-w-0 flex-1 overflow-hidden border border-[#828790] bg-[#a0a0a0]">
          <FormWindow />
        </div>
        <div className="ml-1 flex w-lg shrink-0 flex-col gap-[5px] pb-[5px] pt-px">
          <ObjectInspector />
          <PropertyEditor />
          <ResourceBrowser />
        </div>
      </main>
    </div>
  );
}
